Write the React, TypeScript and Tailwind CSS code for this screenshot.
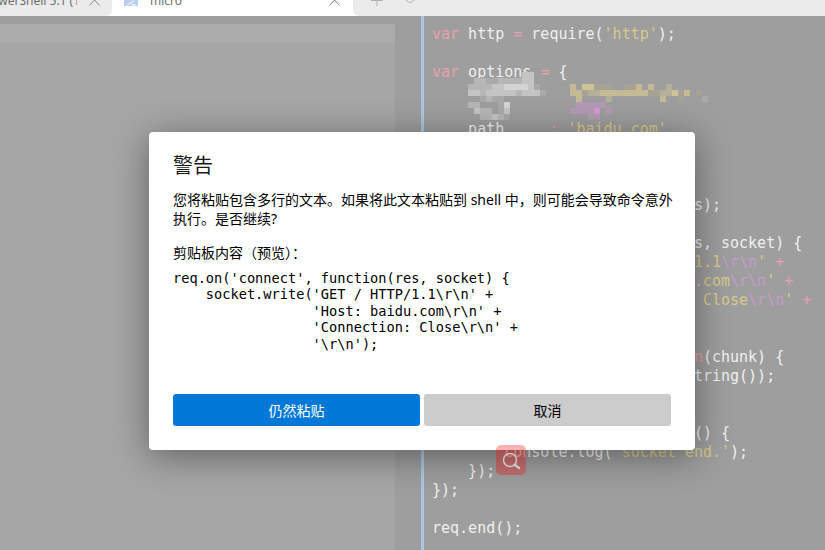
const codeFont = "font-['DejaVu_Sans_Mono','Liberation_Mono',monospace]";
const uiFont = "font-['Noto_Sans','Noto_Sans_CJK_SC',sans-serif]";

type Tok = [string, string?];
const R = "text-[#e8a0ac]";
const Y = "text-[#d9ca8c]";
const P = "text-[#c79ad0]";

const codeLines: Tok[][] = [
  [["var", R], [" http "], ["=", R], [" require("], ["'http'", Y], [");"]],
  [],
  [["var", R], [" options "], ["=", R], [" {"]],
  [],
  [],
  [["    path     "], [":", R], [" "], ["'baidu.com'", Y]],
  [],
  [],
  [],
  [["var", R], [" req "], ["=", R], [" http.request(options);"]],
  [],
  [["req.on("], ["'connect'", Y], [", "], ["function", R], ["(res, socket) {"]],
  [["    socket.write("], ["'GET / HTTP/1.1", Y], ["\\r\\n", P], ["'", Y], [" "], ["+", R]],
  [["                 "], ["'Host: baidu.com", Y], ["\\r\\n", P], ["'", Y], [" "], ["+", R]],
  [["                 "], ["'Connection: Close", Y], ["\\r\\n", P], ["'", Y], [" "], ["+", R]],
  [["                 "], ["'", Y], ["\\r\\n", P], ["'", Y], [");"]],
  [],
  [["    socket.on("], ["'data'", Y], [", "], ["function", R], ["(chunk) {"]],
  [["        console.log(chunk.toString());"]],
  [["    });"]],
  [],
  [["    socket.on("], ["'end'", Y], [", "], ["function", R], ["() {"]],
  [["        console.log("], ["'socket end.'", Y], [");"]],
  [["    });"]],
  [["});"]],
  [],
  [["req.end();"]],
];

const previewText = `req.on('connect', function(res, socket) {
    socket.write('GET / HTTP/1.1\\r\\n' +
                 'Host: baidu.com\\r\\n' +
                 'Connection: Close\\r\\n' +
                 '\\r\\n');`;

// pixelated part of the code, one char per 6px cell
const palette: Record<string, string> = {
  a: "#a9a9a9",
  b: "#b6b6b6",
  c: "#c4c4c4",
  d: "#d4d4d4",
  e: "#a6a396",
  f: "#b5b09a",
  g: "#c4ba94",
  h: "#cdc396",
  i: "#aaa6a8",
  j: "#b59ab5",
  k: "#d29ad2",
  l: "#a89898",
};
const mosaic: string[] = [
  ".........cc",
  ".bbaabbbbcc",
  "bbbbccddddca.....g.hheee..eeg.g..f...",
  "ccbcccccbccca....ggeffggggggggeeffheg.e",
  "..abaa............g....f........g..e...a",
  "bb...ad.........l.jjjjj",
  ".cbb.ac..........jjjjk.j",
  "..bbcba.............ij.",
];

function Mosaic() {
  return (
    <svg width="246" height="48" className="absolute left-[468px] top-[72px]" shapeRendering="crispEdges">
      {mosaic.map((row, y) =>
        row.split("").map((c, x) =>
          c === "." ? null : <rect key={`${x}-${y}`} x={x * 6} y={y * 6} width="6" height="6" fill={palette[c]} />
        )
      )}
    </svg>
  );
}

function TabX() {
  return (
    <svg width="12" height="6" viewBox="0 0 12 6" className="shrink-0" fill="none" stroke="#8a8a8a" strokeWidth="1">
      <path d="M0.5 5.5 L5.5 0 L10.5 5.5" />
    </svg>
  );
}

function TabBar() {
  return (
    <div className={`flex h-4 shrink-0 overflow-hidden bg-white text-[12px] text-[#6e6e6e] ${uiFont}`}>
      <div className="flex w-[112px] items-start overflow-hidden rounded-br-md bg-[#ebebeb]">
        <span className="-mt-[9px] -ml-[16px] w-[93px] shrink-0 overflow-hidden whitespace-nowrap leading-[20px]">
          PowerShell 5.1 (19041)
        </span>
        <span className="ml-[12px]"><TabX /></span>
      </div>
      <div className="flex w-[241px] items-start bg-white pl-3">
        <svg width="14" height="6" viewBox="0 0 14 6" className="shrink-0">
          <path d="M0 0h14v6H0z" fill="#b9cdf2" />
          <path d="M3 5 L10 1 M7 5h5" stroke="#fff" strokeWidth="1" />
        </svg>
        <span className="-mt-[9px] ml-[12px] leading-[20px]">micro</span>
        <span className="ml-auto mr-[12px]"><TabX /></span>
      </div>
      <div className="flex flex-1 items-start rounded-bl-md bg-[#ebebeb] pl-[18px]">
        <svg width="12" height="6" viewBox="0 0 12 6" className="shrink-0" stroke="#b0b0b0" strokeWidth="1">
          <path d="M6 0v6M0 0.5h12" />
        </svg>
        <svg width="10" height="4" viewBox="0 0 10 4" className="ml-[22px] shrink-0" fill="none" stroke="#b0b0b0" strokeWidth="1">
          <path d="M1 0 L5 3 L9 0" />
        </svg>
      </div>
    </div>
  );
}

function LeftPane() {
  return (
    <div className="flex w-[421px] shrink-0 flex-col bg-[#9e9e9e] pr-[26px] pt-2">
      <div className="h-[19px] bg-[#acacac]" />
      <div className="flex-1 bg-[#a6a6a6]" />
    </div>
  );
}

function CodePane() {
  return (
    <div className="relative flex-1 overflow-hidden bg-[#9e9e9e] pl-[8px] pt-[9px]">
      <pre className={`text-[15px] leading-[19px] text-[#f0f0f0] ${codeFont}`}>
        {codeLines.map((line, i) => (
          <div key={i} className="h-[19px]">
            {line.map(([text, cls], j) => (
              <span key={j} className={cls}>{text}</span>
            ))}
          </div>
        ))}
      </pre>
    </div>
  );
}

function WarningDialog() {
  return (
    <div className="absolute left-[149px] top-[132px] flex h-[318px] w-[546px] flex-col rounded-[4px] bg-white px-6 pt-5 shadow-[0_6px_36px_rgba(0,0,0,0.42)]">
      <h1 className={`text-[20px] leading-[28px] text-[#1a1a1a] ${uiFont}`}>警告</h1>
      <p className={`mt-[11px] whitespace-nowrap text-[14px] leading-[18.5px] text-black ${uiFont}`}>
        您将粘贴包含多行的文本。如果将此文本粘贴到 shell 中，则可能会导致命令意外
        <br />
        执行。是否继续?
      </p>
      <p className={`mt-[16px] text-[14px] leading-[18.5px] text-black ${uiFont}`}>剪贴板内容（预览）：</p>
      <pre className={`mt-[7px] text-[13.65px] leading-[16.5px] text-black ${codeFont}`}>{previewText}</pre>
      <div className="mt-auto mb-6 flex gap-1">
        <button className={`h-8 flex-1 rounded-[3px] bg-[#0078d7] text-[14px] text-white ${uiFont}`}>仍然粘贴</button>
        <button className={`h-8 flex-1 rounded-[3px] bg-[#cccccc] text-[14px] text-black ${uiFont}`}>取消</button>
      </div>
    </div>
  );
}

function SearchBadge() {
  return (
    <div className="absolute left-[496px] top-[445px] size-[30px] rounded-[5px] bg-[rgba(255,0,0,0.3)]">
      <svg width="30" height="30" viewBox="0 0 30 30" fill="none" stroke="#d4d4d4" strokeOpacity="0.85" strokeWidth="1.5">
        <circle cx="14" cy="15" r="6.5" />
        <path d="M19 20 L23 23" strokeWidth="2.4" strokeLinecap="round" />
      </svg>
    </div>
  );
}

export default function App() {
  return (
    <div className="relative flex h-[550px] w-[825px] flex-col overflow-hidden bg-[#9e9e9e]">
      <TabBar />
      <div className="flex flex-1">
        <LeftPane />
        <div className="w-[2px] shrink-0 bg-[#9ecbf3]" />
        <div className="w-[1px] shrink-0 bg-[#c4c4c4]" />
        <CodePane />
      </div>
      <Mosaic />
      <WarningDialog />
      <SearchBadge />
    </div>
  );
}
